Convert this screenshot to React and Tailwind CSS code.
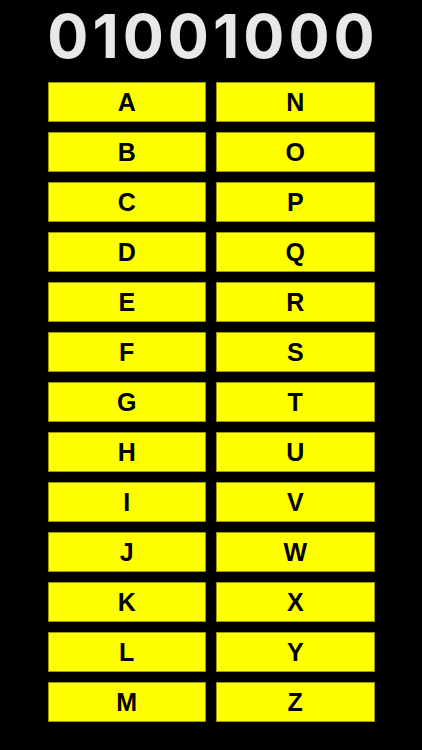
const LEFT = "ABCDEFGHIJKLM".split("");
const RIGHT = "NOPQRSTUVWXYZ".split("");

export default function App() {
  const letters = [];
  LEFT.forEach((l, i) => {
    letters.push(l);
    letters.push(RIGHT[i]);
  });

  return (
    <div className="w-[422px] h-[750px] bg-black overflow-hidden font-['Liberation_Sans',Arial,sans-serif]">
      <div className="pt-[1px]">
        <h1 className="h-[70px] flex items-center justify-center pl-[4px] text-[61px] leading-none font-bold font-['Inter',sans-serif] tracking-[4px] text-[#e8e8e8]">
          01001000
        </h1>
      </div>
      <div className="mt-[11px] mx-auto w-[327px] grid grid-cols-2 gap-x-[10px] gap-y-[10px]">
        {letters.map((l) => (
          <button
            key={l}
            className="h-[40px] bg-[#ffff00] border border-[#9a9a00] flex items-center justify-center text-[25px] font-bold text-black leading-none"
          >
            {l}
          </button>
        ))}
      </div>
    </div>
  );
}
